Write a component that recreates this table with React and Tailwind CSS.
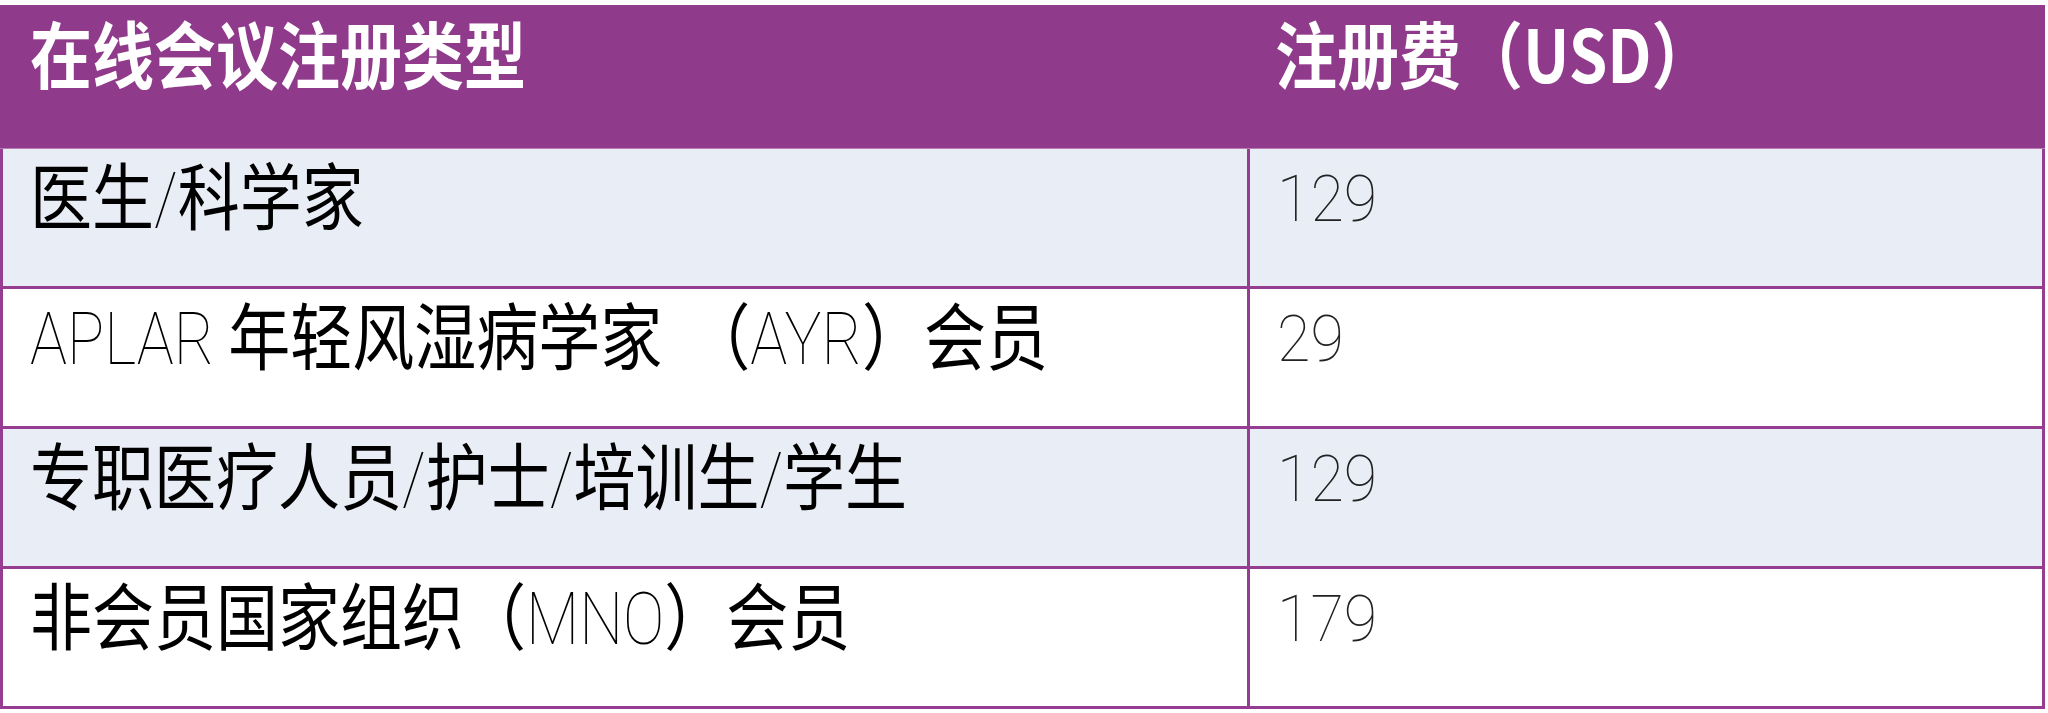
import React from "react";

const CJK = { fontFamily: '"Noto Sans CJK SC", "Noto Sans", sans-serif' };

function T({ children }) {
  return (
    <span className="font-thin" style={{ fontFamily: 'Roboto, "Noto Sans CJK SC", sans-serif' }}>
      {children}
    </span>
  );
}

const rows = [
  { bg: "bg-[#E9EDF5]", label: <>医生<T>/</T>科学家</>, fee: "129" },
  { bg: "bg-white", label: <><T>APLAR</T> 年轻风湿病学家 <span className="ml-[12px]">（</span><T>AYR</T>）会员</>, fee: "29" },
  { bg: "bg-[#E9EDF5]", label: <>专职医疗人员<T>/</T>护士<T>/</T>培训生<T>/</T>学生</>, fee: "129" },
  { bg: "bg-white", label: <>非会员国家组织（<T>MNO</T>）会员</>, fee: "179" },
];

export default function App() {
  return (
    <div className="w-[2048px] h-[713px] bg-white pt-[5px]" style={CJK}>
      <div className="w-[2045px]">
        <div className="grid grid-cols-[1247px_1fr] h-[144px] bg-[#8F3A8A] text-white font-bold text-[62px] leading-[1.2] border-b border-[#B77DB3]">
          <div className="pl-[30px] pt-[3px] whitespace-nowrap">
            <div className="scale-y-[1.17] origin-top">在线会议注册类型</div>
          </div>
          <div className="pl-[28px] pt-[3px] whitespace-nowrap">
            <div className="scale-y-[1.17] origin-top">注册费（USD）</div>
          </div>
        </div>
        {rows.map((r, i) => (
          <div
            key={i}
            className={`grid grid-cols-[1244px_1fr] border-x-[3px] border-[#953D90] ${r.bg} ${
              i === 0 ? "h-[137px]" : "h-[140px] border-t-[3px]"
            } ${i === rows.length - 1 ? "h-[143px] border-b-[3px]" : ""}`}
          >
            <div className="pl-[27px] pt-0 text-[62px] leading-[1.2] text-black whitespace-nowrap">
              <div className="scale-y-[1.17] origin-top">{r.label}</div>
            </div>
            <div className="border-l-[3px] border-[#953D90] pl-[27px] pt-[5px] text-[61px] leading-[1.2] text-[#222]">
              <div className="scale-y-[1.06] origin-top">
                <T>{r.fee}</T>
              </div>
            </div>
          </div>
        ))}
      </div>
    </div>
  );
}
